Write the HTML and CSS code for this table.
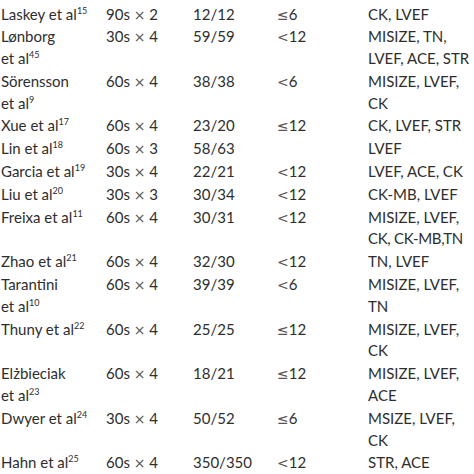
FILE: index.html
```html
<!DOCTYPE html>
<html lang="en">
<head>
<meta charset="utf-8">
<title>Studies table</title>
<link rel="stylesheet" href="styles.css">
</head>
<body>
<table class="studies">
  <colgroup>
    <col class="c-study">
    <col class="c-cycles">
    <col class="c-n">
    <col class="c-time">
    <col class="c-end">
  </colgroup>
  <tbody>
    <tr><td>Laskey <span class="etal">et al<sup class="ref">15</sup></span></td><td>90s <span class="sym">×</span> 2</td><td>12/12</td><td><span class="sym">≤</span>6</td><td>CK, LVEF</td></tr>
    <tr><td class="broken">Lønborg <span class="etal">et al<sup class="ref">45</sup></span></td><td>30s <span class="sym">×</span> 4</td><td>59/59</td><td><span class="sym">&lt;</span>12</td><td>MISIZE, TN, LVEF, ACE, STR</td></tr>
    <tr><td class="broken">Sörensson <span class="etal">et al<sup class="ref">9</sup></span></td><td>60s <span class="sym">×</span> 4</td><td>38/38</td><td><span class="sym">&lt;</span>6</td><td>MISIZE, LVEF, CK</td></tr>
    <tr><td>Xue <span class="etal">et al<sup class="ref">17</sup></span></td><td>60s <span class="sym">×</span> 4</td><td>23/20</td><td><span class="sym">≤</span>12</td><td>CK, LVEF, STR</td></tr>
    <tr><td>Lin <span class="etal">et al<sup class="ref">18</sup></span></td><td>60s <span class="sym">×</span> 3</td><td>58/63</td><td></td><td>LVEF</td></tr>
    <tr><td>Garcia <span class="etal">et al<sup class="ref">19</sup></span></td><td>30s <span class="sym">×</span> 4</td><td>22/21</td><td><span class="sym">&lt;</span>12</td><td>LVEF, ACE, CK</td></tr>
    <tr><td>Liu <span class="etal">et al<sup class="ref">20</sup></span></td><td>30s <span class="sym">×</span> 3</td><td>30/34</td><td><span class="sym">&lt;</span>12</td><td>CK-MB, LVEF</td></tr>
    <tr><td>Freixa <span class="etal">et al<sup class="ref">11</sup></span></td><td>60s <span class="sym">×</span> 4</td><td>30/31</td><td><span class="sym">&lt;</span>12</td><td>MISIZE, LVEF, <span class="tight">CK, CK-MB,TN</span></td></tr>
    <tr><td>Zhao <span class="etal">et al<sup class="ref">21</sup></span></td><td>60s <span class="sym">×</span> 4</td><td>32/30</td><td><span class="sym">&lt;</span>12</td><td>TN, LVEF</td></tr>
    <tr><td class="broken">Tarantini <span class="etal">et al<sup class="ref">10</sup></span></td><td>60s <span class="sym">×</span> 4</td><td>39/39</td><td><span class="sym">&lt;</span>6</td><td>MISIZE, LVEF, TN</td></tr>
    <tr><td>Thuny <span class="etal">et al<sup class="ref">22</sup></span></td><td>60s <span class="sym">×</span> 4</td><td>25/25</td><td><span class="sym">≤</span>12</td><td>MISIZE, LVEF, CK</td></tr>
    <tr><td class="broken">Elżbieciak <span class="etal">et al<sup class="ref">23</sup></span></td><td>60s <span class="sym">×</span> 4</td><td>18/21</td><td><span class="sym">≤</span>12</td><td>MISIZE, LVEF, ACE</td></tr>
    <tr><td>Dwyer <span class="etal">et al<sup class="ref">24</sup></span></td><td>30s <span class="sym">×</span> 4</td><td>50/52</td><td><span class="sym">≤</span>6</td><td>MSIZE, LVEF, CK</td></tr>
    <tr><td>Hahn <span class="etal">et al<sup class="ref">25</sup></span></td><td>60s <span class="sym">×</span> 4</td><td>350/350</td><td><span class="sym">&lt;</span>12</td><td>STR, ACE</td></tr>
  </tbody>
</table>
</body>
</html>
```
FILE: styles.css
```css
html, body {
  margin: 0;
  padding: 0;
  background: #ffffff;
}

body {
  font-family: "Lato", "Noto Sans", sans-serif;
  font-size: 15px;
  color: #2e2e2e;
}

.studies {
  border-collapse: collapse;
  table-layout: fixed;
  width: 474px;
  margin-top: 3px;
}

.c-study { width: 106px; }
.c-cycles { width: 87px; }
.c-n { width: 84px; }
.c-time { width: 91px; }
.c-end { width: 106px; }

.studies td {
  padding: 0.5px 4px 0.5px 0;
  line-height: 21.8px;
  vertical-align: top;
}

.studies td:first-child {
  padding-left: 1px;
  padding-right: 4px;
}

.studies td:last-child {
  padding-right: 0;
}

.etal {
  white-space: nowrap;
}

.broken .etal {
  display: block;
}

.ref {
  font-size: 9px;
  line-height: 0;
  vertical-align: 6px;
}

.sym {
  font-family: "DejaVu Sans", sans-serif;
  font-size: 14px;
  line-height: 1;
  color: #555555;
}

.tight {
  letter-spacing: -0.3px;
  white-space: nowrap;
}
```
